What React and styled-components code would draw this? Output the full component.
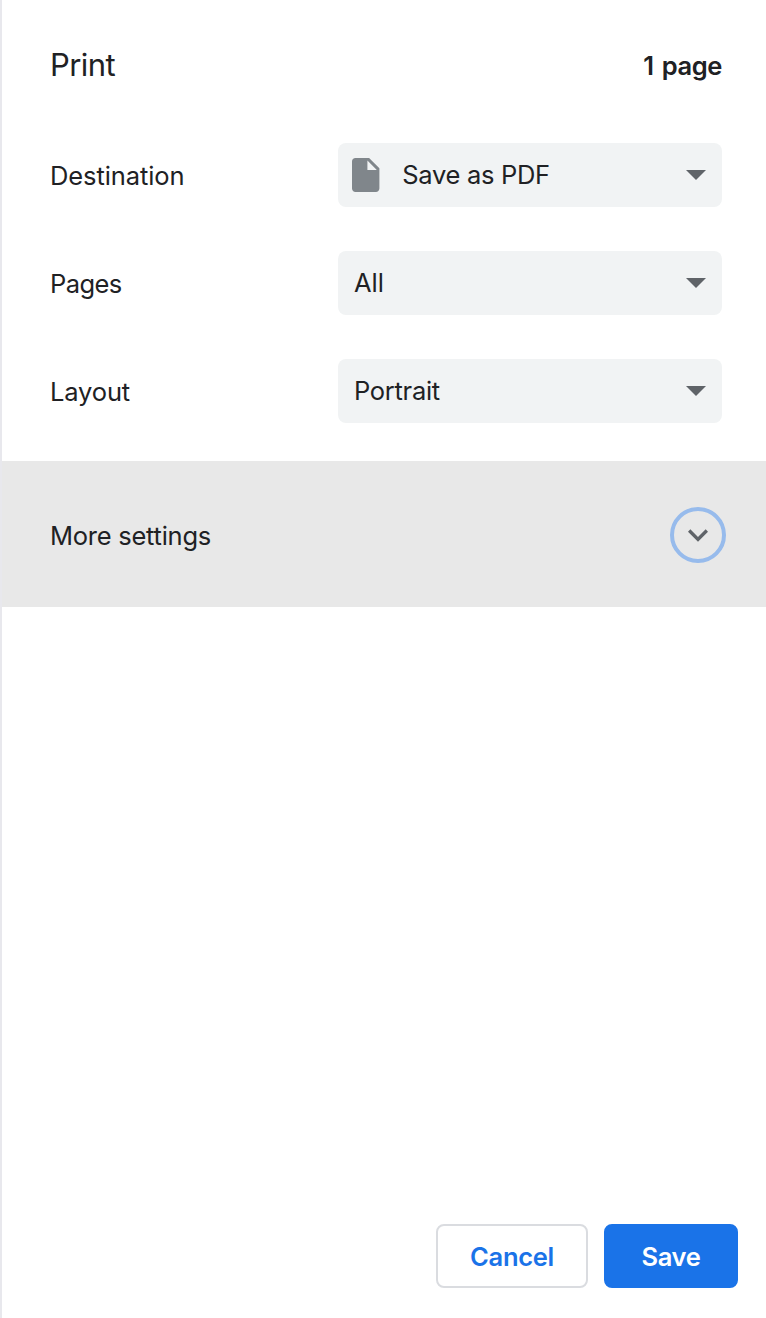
import styled, { createGlobalStyle } from "styled-components";

const GlobalStyle = createGlobalStyle`
  body {
    margin: 0;
    background: #fff;
    color: #202124;
    font-family: Inter, "Liberation Sans", sans-serif;
    font-size: 25.5px;
  }
`;

const Container = styled.div`
  width: 100%;
  height: 100vh;
  display: flex;
  flex-direction: column;
  border-left: 2px solid #e8e8ed;
  box-sizing: border-box;
`;

const Header = styled.header`
  height: 121px;
  display: flex;
  align-items: center;
  justify-content: space-between;
  padding: 10px 44px 0 48px;
  box-sizing: border-box;
`;

const Title = styled.h1`
  margin: 0;
  padding-bottom: 2px;
  font-size: 31px;
  line-height: 40px;
  font-weight: 400;
  letter-spacing: -0.6px;
`;

const PageCount = styled.span`
  font-weight: 600;
  line-height: 32px;
  letter-spacing: -0.4px;
  word-spacing: 2px;
`;

const SettingsRow = styled.div`
  height: 108px;
  display: flex;
  align-items: center;
  justify-content: space-between;
  padding: 0 44px 0 48px;
  box-sizing: border-box;
`;

const Label = styled.span`
  line-height: 32px;
  padding-top: 2px;
  letter-spacing: ${(props) => props.$spacing || 0}px;
`;

const Select = styled.button`
  width: 384px;
  height: 64px;
  display: flex;
  align-items: center;
  border: none;
  border-radius: 8px;
  background: #f1f3f4;
  color: inherit;
  font: inherit;
  padding: 0 16px;
  cursor: pointer;
`;

const SelectValue = styled.span`
  flex: 1;
  text-align: left;
  line-height: 32px;
  letter-spacing: ${(props) => props.$spacing || 0}px;
`;

const FileIcon = styled.svg`
  width: 27.4px;
  height: 34px;
  margin: 0 22.5px 0 -1.7px;
  fill: #80868b;
`;

const Arrow = styled.svg`
  width: 20px;
  height: 10px;
  fill: #5f6368;
`;

const MoreSettings = styled.div`
  height: 146px;
  margin-top: 16px;
  display: flex;
  align-items: center;
  justify-content: space-between;
  background: #e8e8e8;
  padding: 2px 40px 0 48px;
  box-sizing: border-box;
  cursor: pointer;
`;

const ExpandButton = styled.button`
  width: 56px;
  height: 56px;
  display: flex;
  align-items: center;
  justify-content: center;
  border: 4px solid #97bbec;
  border-radius: 50%;
  background: none;
  padding: 0;
  cursor: pointer;
`;

const ExpandIcon = styled.svg`
  width: 40px;
  height: 40px;
  flex-shrink: 0;
  fill: #5f6368;
`;

const Footer = styled.footer`
  margin-top: auto;
  display: flex;
  justify-content: flex-end;
  gap: 16px;
  padding: 0 28px 30px;
`;

const Button = styled.button`
  width: ${(props) => (props.$primary ? 134 : 152)}px;
  height: 64px;
  border: 2px solid ${(props) => (props.$primary ? "#1a73e8" : "#dadce0")};
  border-radius: 8px;
  background: ${(props) => (props.$primary ? "#1a73e8" : "#fff")};
  color: ${(props) => (props.$primary ? "#fff" : "#1a73e8")};
  font: inherit;
  font-weight: 600;
  padding: 0;
  letter-spacing: -0.3px;
  cursor: pointer;
`;

const settings = [
  {
    label: "Destination",
    labelSpacing: -0.1,
    value: "Save as PDF",
    valueSpacing: -0.3,
    icon: true,
  },
  { label: "Pages", labelSpacing: -0.6, value: "All" },
  {
    label: "Layout",
    labelSpacing: -0.15,
    value: "Portrait",
    valueSpacing: -0.3,
  },
];

function App() {
  return (
    <Container>
      <GlobalStyle />
      <Header>
        <Title>Print</Title>
        <PageCount>1 page</PageCount>
      </Header>
      {settings.map((item) => (
        <SettingsRow key={item.label}>
          <Label $spacing={item.labelSpacing}>{item.label}</Label>
          <Select>
            {item.icon && (
              <FileIcon viewBox="4 2 16 20" preserveAspectRatio="none">
                <path d="M6 2c-1.1 0-2 .9-2 2v16c0 1.1.9 2 2 2h12c1.1 0 2-.9 2-2V8l-6-6H6zm7 7V3.5L18.5 9H13z" />
              </FileIcon>
            )}
            <SelectValue $spacing={item.valueSpacing}>{item.value}</SelectValue>
            <Arrow viewBox="0 0 20 10">
              <path d="M0 0h20L10 10z" />
            </Arrow>
          </Select>
        </SettingsRow>
      ))}
      <MoreSettings>
        <Label $spacing={-0.25}>More settings</Label>
        <ExpandButton aria-label="More settings">
          <ExpandIcon viewBox="0 0 24 24">
            <path d="M16.59 8.59L12 13.17 7.41 8.59 6 10l6 6 6-6z" />
          </ExpandIcon>
        </ExpandButton>
      </MoreSettings>
      <Footer>
        <Button>Cancel</Button>
        <Button $primary>Save</Button>
      </Footer>
    </Container>
  );
}

export default App;
